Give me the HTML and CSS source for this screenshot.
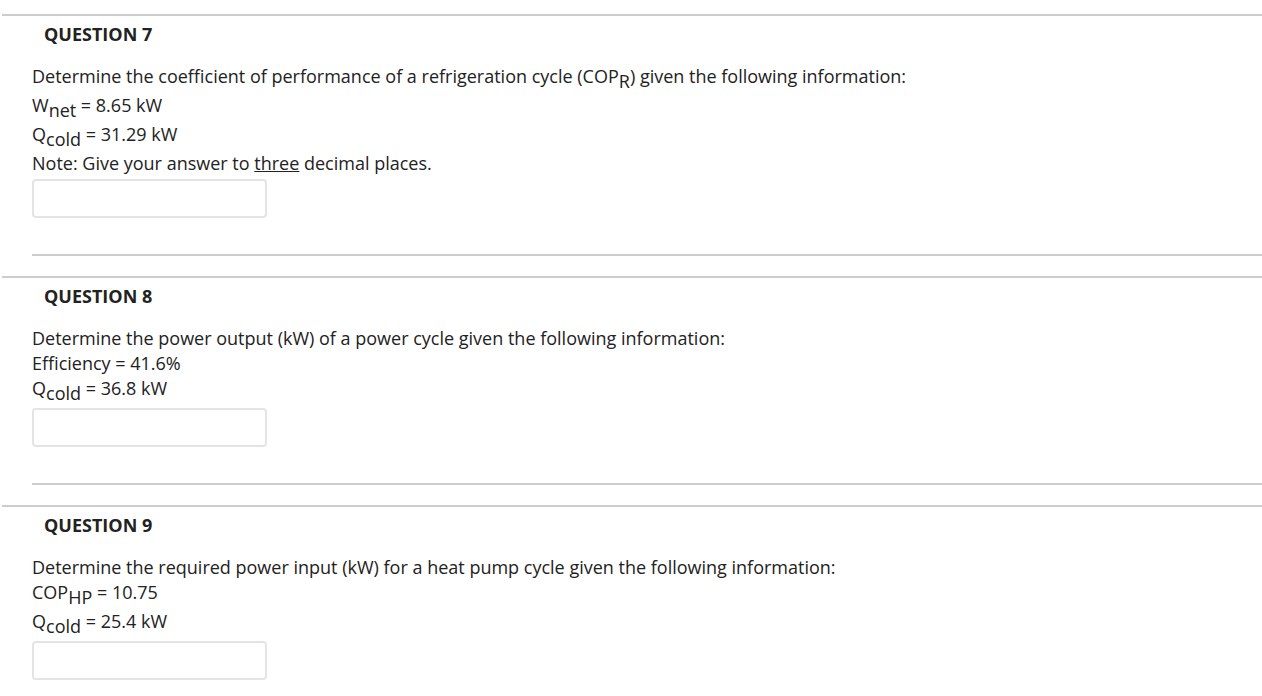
FILE: index.html
```html
<!DOCTYPE html>
<html>
<head>
<meta charset="utf-8">
<link rel="stylesheet" href="styles.css">
</head>
<body>
<div class="page">
  <section class="question">
    <h3 class="q-title">QUESTION 7</h3>
    <div class="q-body">
      <p class="line has-sub">Determine the coefficient of performance of a refrigeration cycle (COP<sub>R</sub>) given the following information:</p>
      <p class="line has-sub">W<sub>net</sub> = 8.65 kW</p>
      <p class="line has-sub">Q<sub>cold</sub> = 31.29 kW</p>
      <p class="line">Note: Give your answer to <u>three</u> decimal places.</p>
      <input class="answer" type="text">
    </div>
  </section>
  <section class="question">
    <h3 class="q-title">QUESTION 8</h3>
    <div class="q-body">
      <p class="line">Determine the power output (kW) of a power cycle given the following information:</p>
      <p class="line">Efficiency = 41.6%</p>
      <p class="line has-sub">Q<sub>cold</sub> = 36.8 kW</p>
      <input class="answer" type="text">
    </div>
  </section>
  <section class="question">
    <h3 class="q-title">QUESTION 9</h3>
    <div class="q-body">
      <p class="line">Determine the required power input (kW) for a heat pump cycle given the following information:</p>
      <p class="line has-sub">COP<sub>HP</sub> = 10.75</p>
      <p class="line has-sub">Q<sub>cold</sub> = 25.4 kW</p>
      <input class="answer" type="text">
    </div>
  </section>
</div>
</body>
</html>
```
FILE: styles.css
```css
html, body {
  margin: 0;
  padding: 0;
  background: #fff;
}
body {
  font-family: "Open Sans", "Liberation Sans", sans-serif;
  color: #222;
  font-size: 18px;
}
.page {
  padding: 14px 0 0 2px;
}
.question {
  border-top: 2px solid #cdcdcd;
  margin-bottom: 20px;
}
.q-title {
  margin: 0;
  padding: 6px 0 0 42px;
  font-size: 18px;
  font-weight: 700;
  line-height: 24px;
  color: #222;
}
.q-body {
  margin-left: 30px;
  padding-top: 18px;
  padding-bottom: 36px;
  border-bottom: 2px solid #cdcdcd;
}
.line {
  margin: 0;
  line-height: 25px;
  height: 25px;
  white-space: nowrap;
}
.line.has-sub {
  height: 29px;
}
sub {
  font-size: 18px;
  vertical-align: -5px;
  line-height: 0;
}
u {
  text-decoration: underline;
}
.answer {
  display: block;
  margin-top: 3px;
  width: 235px;
  height: 39px;
  box-sizing: border-box;
  border: 2px solid #e4e4e4;
  border-radius: 4px;
  background: #fff;
  font: inherit;
}
```
